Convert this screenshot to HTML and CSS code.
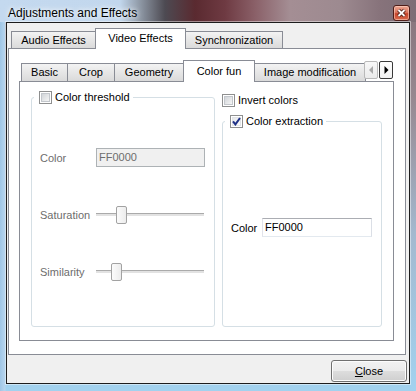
FILE: index.html
```html
<!DOCTYPE html>
<html>
<head>
<meta charset="utf-8">
<title>Adjustments and Effects</title>
<link rel="stylesheet" href="styles.css">
</head>
<body>
<div class="window">
  <div class="titlebar">
    <span class="title">Adjustments and Effects</span>
    <span class="winclose">
      <svg width="11" height="10" viewBox="0 0 11 10"><path d="M2.5 2 L8.5 8 M8.5 2 L2.5 8" stroke="#4a1a12" stroke-width="3.6" fill="none"/><path d="M2.5 2 L8.5 8 M8.5 2 L2.5 8" stroke="#fff" stroke-width="1.8" fill="none"/></svg>
    </span>
  </div>
  <div class="client">
    <div class="otabs">
      <div class="tabbar obar">
        <div class="tab t-audio">Audio Effects</div>
        <div class="tab sel t-video">Video Effects</div>
        <div class="tab t-sync">Synchronization</div>
      </div>
      <div class="opanel">
        <div class="tabbar ibar">
          <div class="tab t-basic">Basic</div>
          <div class="tab t-crop">Crop</div>
          <div class="tab t-geo">Geometry</div>
          <div class="tab sel t-fun">Color fun</div>
          <div class="tab t-img">Image modification</div>
          <div class="scroller">
            <span class="sbtn off"><svg width="5" height="8" viewBox="0 0 5 8"><path d="M4 0 L0 4 L4 8Z" fill="#a9a9a9"/></svg></span>
            <span class="sbtn on"><svg width="5" height="8" viewBox="0 0 5 8"><path d="M0.5 0 L4.5 4 L0.5 8Z" fill="#000"/></svg></span>
          </div>
        </div>
        <div class="ipanel">
          <fieldset class="group g-thresh">
            <legend><span class="check"><span class="box"></span>Color threshold</span></legend>
            <div class="form disabled">
              <span class="lbl">Color</span><span class="field">FF0000</span>
              <span class="lbl">Saturation</span><span class="slider"><span class="thumb" style="left:20px"></span></span>
              <span class="lbl">Similarity</span><span class="slider"><span class="thumb" style="left:15px"></span></span>
            </div>
          </fieldset>
          <div class="rcol">
            <div class="check invert"><span class="box"></span>Invert colors</div>
            <fieldset class="group g-extract">
              <legend><span class="check"><span class="box checked"><svg width="9" height="9" viewBox="0 0 9 9"><path d="M1 4.3 L3.4 7.4 L8 1" fill="none" stroke="#1f3187" stroke-width="2"/></svg></span>Color extraction</span></legend>
              <div class="row">
                <span class="lbl2">Color</span><span class="field">FF0000</span>
              </div>
            </fieldset>
          </div>
        </div>
      </div>
    </div>
    <div class="buttons"><span class="btn"><u>C</u>lose</span></div>
  </div>
</div>
</body>
</html>
```
FILE: styles.css
```css
* { box-sizing: border-box; }
html, body { margin: 0; padding: 0; }
body {
  width: 416px;
  height: 391px;
  overflow: hidden;
  font-family: "Liberation Sans", Arial, sans-serif;
  font-size: 11px;
  color: #000;
}

.window {
  width: 416px;
  height: 391px;
  display: flex;
  flex-direction: column;
  padding: 0 6px 7px 6px;
  background:
    linear-gradient(90deg, #9fc6e6 0, #b7d5ee 5px, transparent 6px),
    linear-gradient(180deg, #86727a 0, #978890 25%, #a3b9cf 60%, #a2d2ef 100%);
}

.titlebar {
  height: 22px;
  margin: 0 -6px;
  display: flex;
  align-items: flex-start;
  padding: 0 6px 0 8px;
  background: linear-gradient(90deg, #c4d9ef 0px, #c2d7ed 120px, #8e98a5 140px, #4d4a52 165px, #5a2a30 195px, #6e3a42 225px, #8a6068 255px, #a48e94 290px, #9d8a90 340px, #87737b 380px, #7d6d75 416px);
}
.title {
  flex: 1;
  margin-top: 6px;
  font-size: 12px;
  line-height: 14px;
  text-shadow: 0 0 4px #fff, 0 0 8px rgba(255,255,255,0.8);
}
.winclose {
  margin-top: 5px;
  width: 17px;
  height: 16px;
  border: 1px solid #4f1d18;
  border-radius: 3px;
  background: linear-gradient(#eea793, #dc7760 45%, #c7452c 55%, #d8694c);
  box-shadow: inset 0 0 0 1px rgba(255,215,200,0.55);
  display: flex;
  align-items: center;
  justify-content: center;
}

.client {
  flex: 1;
  border: 1px solid #1d1d1d;
  box-shadow: 0 0 0 1px rgba(255,255,255,0.45);
  background: #f0f0f0;
  display: flex;
  flex-direction: column;
  padding: 5px 2px 1px 1px;
}

.otabs {
  flex: 1;
  display: flex;
  flex-direction: column;
  margin-right: 1px;
}

.tabbar {
  display: flex;
  align-items: flex-end;
  position: relative;
  flex: none;
}
.obar { height: 20px; padding-left: 3px; }
.ibar { height: 21px; padding-left: 2px; }

.tab {
  flex: none;
  border: 1px solid #898c95;
  border-bottom: 0;
  background: linear-gradient(#f3f3f3, #e6e6e6 50%, #dadada);
  margin-right: -1px;
  text-align: center;
  white-space: nowrap;
  overflow: hidden;
}
.tab.sel {
  background: #fff;
  position: relative;
  z-index: 1;
  margin-bottom: -1px;
}
.obar .tab { height: 17px; line-height: 16px; }
.obar .tab.sel { height: 21px; line-height: 19px; }
.ibar .tab { height: 18px; line-height: 17px; }
.ibar .tab.sel { height: 22px; line-height: 20px; }

.t-audio { width: 85px; }
.t-video { width: 91px; }
.t-sync { width: 98px; }
.t-basic { width: 47px; }
.t-crop { width: 48px; }
.t-geo { width: 70px; }
.t-fun { width: 72px; }
.t-img { width: 112px; }

.scroller {
  position: absolute;
  right: 1px;
  top: 1px;
  z-index: 2;
  display: flex;
  gap: 1px;
}
.sbtn {
  width: 14px;
  height: 18px;
  border: 1px solid #b9b9b9;
  border-radius: 2px;
  background: linear-gradient(#f8f8f8, #ebebeb);
  display: flex;
  align-items: center;
  justify-content: center;
}
.sbtn.on {
  border-color: #3a3a3a;
  background: linear-gradient(#ffffff, #f1f1f1);
}

.opanel {
  flex: 1;
  border: 1px solid #898c95;
  background: #fff;
  padding: 11px 11px 13px 10px;
  display: flex;
  flex-direction: column;
}

.ipanel {
  flex: 1;
  border: 1px solid #898c95;
  background: #fff;
  display: flex;
  gap: 7px;
  padding: 8px 11px 13px 11px;
}

.group {
  margin: 0;
  padding: 0;
  min-width: 0;
  border: 1px solid #d5dfe5;
  border-radius: 3px;
}
.group legend {
  margin-left: 2px;
  padding: 0 3px 0 5px;
  height: 15px;
  line-height: 15px;
}
.g-thresh { width: 184px; flex: none; }

.check {
  display: flex;
  align-items: center;
  height: 15px;
  white-space: nowrap;
}
.box {
  flex: none;
  position: relative;
  width: 13px;
  height: 13px;
  border: 1px solid #8e8f8f;
  background: #fff;
  margin-right: 3px;
}
.box::after {
  content: "";
  position: absolute;
  inset: 1px;
  border: 1px solid #c3c7cc;
  background: linear-gradient(135deg, #d2d5d9, #f5f5f5);
}
.box.checked::after {
  border-color: #e2e4e7;
  background: linear-gradient(135deg, #e6e8eb, #fbfbfb);
}
.box svg {
  position: absolute;
  left: 1px;
  top: 1px;
  z-index: 1;
}

.form {
  display: grid;
  grid-template-columns: 56px 109px;
  grid-auto-rows: 19px;
  row-gap: 38px;
  align-items: center;
  padding: 43px 0 0 8px;
}
.disabled .lbl { color: #6d6d6d; }

.field {
  display: block;
  height: 19px;
  width: 109px;
  border: 1px solid;
  border-color: #abadb3 #dbdfe6 #e3e9ef #e2e3ea;
  background: #fff;
  padding-left: 2px;
  line-height: 17px;
}
.disabled .field {
  background: #f0f0f0;
  border-color: #adb2b5;
  color: #6d6d6d;
}

.slider {
  position: relative;
  display: block;
  height: 19px;
  width: 108px;
}
.slider::before {
  content: "";
  position: absolute;
  left: 0;
  right: 0;
  top: 8px;
  height: 2px;
  border-top: 1px solid #aaaaaa;
  background: #e2e2e2;
}
.thumb {
  position: absolute;
  top: 1px;
  width: 11px;
  height: 18px;
  border: 1px solid #a2a2a2;
  border-radius: 2px;
  background: linear-gradient(90deg, #fbfbfb, #ececec);
}

.rcol {
  flex: 1;
  display: flex;
  flex-direction: column;
}
.invert { margin-top: 3px; height: 14px; }
.g-extract {
  flex: 1;
  margin-top: 7px;
  display: flex;
  flex-direction: column;
}
.g-extract .row {
  flex: 1;
  display: flex;
  align-items: center;
  padding: 0 8px;
}
.lbl2 { width: 31px; flex: none; }
.g-extract .field { width: 110px; }

.buttons {
  display: flex;
  justify-content: flex-end;
  margin-top: 5px;
}
.btn {
  width: 76px;
  height: 22px;
  border: 1px solid #707070;
  border-radius: 3px;
  background: linear-gradient(#f2f2f2 0%, #ebebeb 50%, #dddddd 51%, #cfcfcf 100%);
  box-shadow: inset 0 0 0 1px #fcfcfc;
  display: flex;
  align-items: center;
  justify-content: center;
}
```
